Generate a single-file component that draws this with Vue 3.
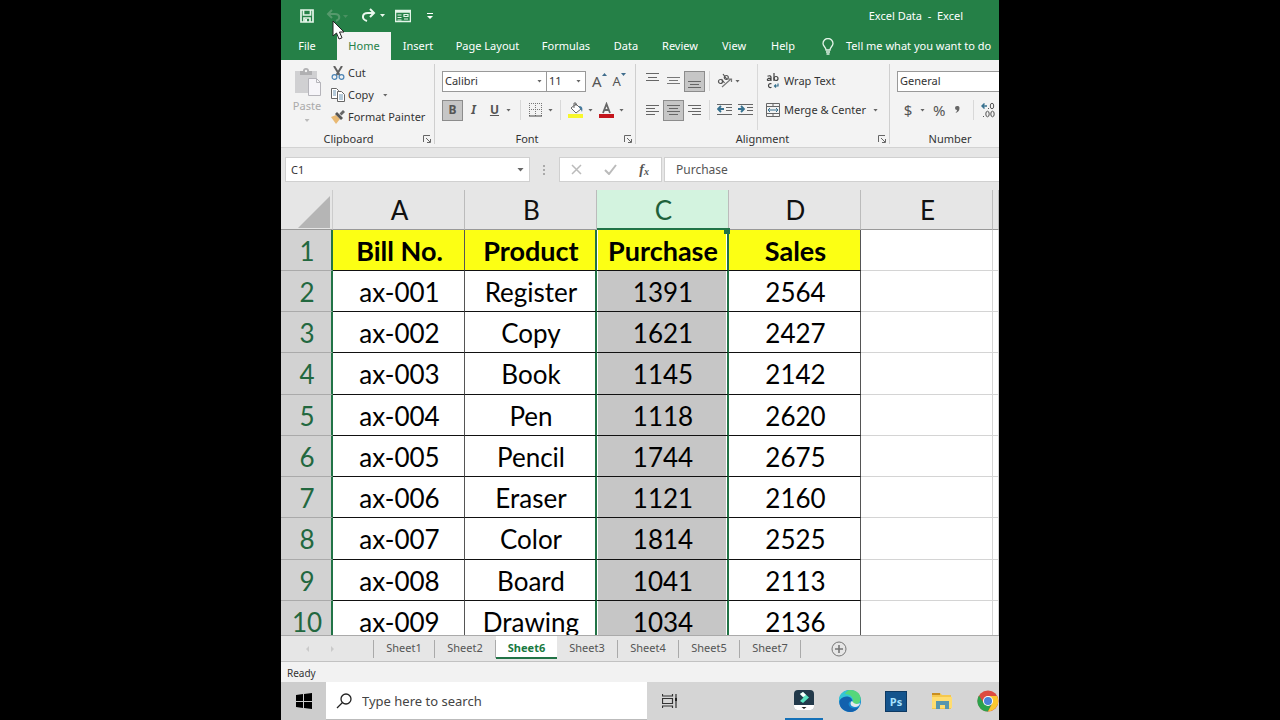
<script setup>
import { ref } from 'vue'

const tabs = [
  { name: 'File', w: 52 }, { name: 'Home', w: 54 }, { name: 'Insert', w: 54 },
  { name: 'Page Layout', w: 85 }, { name: 'Formulas', w: 72 }, { name: 'Data', w: 48 },
  { name: 'Review', w: 60 }, { name: 'View', w: 48 }, { name: 'Help', w: 50 },
]
const columns = ['A', 'B', 'C', 'D', 'E', '']
const rows = [
  ['Bill No.', 'Product', 'Purchase', 'Sales'],
  ['ax-001', 'Register', '1391', '2564'],
  ['ax-002', 'Copy', '1621', '2427'],
  ['ax-003', 'Book', '1145', '2142'],
  ['ax-004', 'Pen', '1118', '2620'],
  ['ax-005', 'Pencil', '1744', '2675'],
  ['ax-006', 'Eraser', '1121', '2160'],
  ['ax-007', 'Color', '1814', '2525'],
  ['ax-008', 'Board', '1041', '2113'],
  ['ax-009', 'Drawing', '1034', '2136'],
]
const sheets = ['Sheet1', 'Sheet2', 'Sheet6', 'Sheet3', 'Sheet4', 'Sheet5', 'Sheet7']
const search = ref('')
const formula = ref('Purchase')
const cellName = ref('C1')
</script>

<template>
  <div class="screen">
    <div class="desktop">
      <header class="titlebar">
        <div class="quick">
          <button aria-label="Save"><svg width="16" height="16" viewBox="0 0 16 16" fill="none" stroke="#e4f5e9" stroke-width="1.7"><path d="M2 2h12v12H2zM4.500 2v5h7V2M5 14v-4h6v4" /><path d="M6 11h2v3H6z" fill="#e4f5e9" stroke="none" /></svg></button>
          <button aria-label="Undo"><svg width="24" height="16" viewBox="0 0 24 16" fill="none" stroke="#56996c" stroke-width="2"><path d="M6 2L2 6l4 4M2 6h7c5 0 6 5 1 7" /><path d="M17 7h5l-2.500 3z" fill="#4a9162" stroke="none" /></svg></button>
          <button aria-label="Redo"><svg width="26" height="16" viewBox="0 0 26 16" fill="none" stroke="#eaf8ee" stroke-width="2"><path d="M9 1l4 4-4 4M13 5H7C1 5 0 11 6 13" /><path d="M19 6h5l-2.500 3z" fill="#eaf8ee" stroke="none" /></svg></button>
          <button aria-label="Form"><svg width="16" height="16" viewBox="0 0 16 16" fill="none" stroke="#e4f5e9"><path d="M.5 2.500h15v11H.5zM1 4h14" stroke-width="1.500" /><path d="M2.500 7h4M2.500 9.500h4M2.500 12h4M9 6.500h4v2H9zM9 11h4" stroke-width="1.200" /></svg></button>
          <button aria-label="Customize toolbar"><svg width="8" height="10" viewBox="0 0 8 10" fill="#fff"><path d="M1 2h6v1H1zM1 5h6L4 8z" /></svg></button>
        </div>
        <span class="doc">Excel Data&nbsp; -&nbsp; Excel</span>
        <svg class="cursor" width="14" height="20" viewBox="0 0 14 20"><path d="M1 1v15l3.500-3 2.500 6 3-1.200L7.500 12H12z" fill="#fff" stroke="#222" /></svg>
      </header>

      <nav class="tabs">
        <button v-for="t in tabs" :key="t.name" :class="{ on: t.name === 'Home' }" :style="{ width: t.w + 'px' }">{{ t.name }}</button>
        <button class="tell"><svg width="12" height="17" viewBox="0 0 12 17" fill="none" stroke="#e4f5e9" stroke-width="1.300"><path d="M4 12c0-3-3-3.500-3-6.500a5 5 0 0 1 10 0c0 3-3 3.500-3 6.500zM4 14h4M4.500 16h3" /></svg>Tell me what you want to do</button>
      </nav>

      <section class="ribbon">
        <div class="group clip">
          <div class="body">
            <button class="paste">
              <svg width="28" height="30" viewBox="0 0 28 30"><path d="M2 4h22v22H2z" fill="#d0d0d2" /><path d="M7 4h3a3 3 0 0 1 6 0h3v4H7z" fill="#b0b0b2" /><circle cx="13" cy="4" r="1.200" fill="#f3f3f3" /><path d="M15.500 11.500h8l4 4v13h-12z" fill="#f6f5f9" stroke="#b5b4ba" /><path d="M23.500 11.500v4h4" fill="none" stroke="#b5b4ba" /></svg>
              <span>Paste</span><i class="caret pale"></i>
            </button>
            <div class="stack">
              <button><svg width="14" height="14" viewBox="0 0 14 14" fill="none"><path d="M3 0l5.500 9M11 0L5.500 9" stroke="#606060" stroke-width="2" /><circle cx="3.500" cy="11" r="2.400" stroke="#4b84b5" stroke-width="1.200" /><circle cx="10.500" cy="11" r="2.400" stroke="#4b84b5" stroke-width="1.200" /></svg>Cut</button>
              <button><svg width="14" height="14" viewBox="0 0 14 14" fill="#fff" stroke="#666"><path d="M.5.5h5l2 2v8h-7z" /><path d="M2 3h3M2 5h3M2 7h3" stroke="#6d96b5" /><path d="M6.500 3.500h4l3 3v7h-7z" /><path d="M8 7h4M8 9h4M8 11h4" stroke="#6d96b5" /></svg>Copy<i class="caret"></i></button>
              <button><svg width="14" height="14" viewBox="0 0 14 14"><path d="M0 7l5-2 4 4-4 5z" fill="#e9b973" /><path d="M4 4l2-2 6 6-2 2z" fill="#555" /><path d="M8.500 3.500L12 0l2 2-3.500 3.500z" fill="#666" /></svg>Format Painter</button>
            </div>
          </div>
          <footer>Clipboard<svg class="launch" width="8" height="8" viewBox="0 0 8 8"><path d="M.5 7V.5H7M3 3l4 4M7.500 4v3.500H4" /></svg></footer>
        </div>

        <div class="group font">
          <div class="body col">
            <div class="line">
              <button class="combo family">Calibri<i class="caret"></i></button>
              <button class="combo size">11<i class="caret"></i></button>
              <button class="big" aria-label="Increase font size">A<svg width="5" height="4" viewBox="0 0 5 4"><path d="M0 3h5L2.500 0z" fill="#3f6c8c" /></svg></button>
              <button class="small" aria-label="Decrease font size">A<svg width="5" height="4" viewBox="0 0 5 4"><path d="M0 0h5L2.500 3z" fill="#3f6c8c" /></svg></button>
            </div>
            <div class="line">
              <button class="sq on"><b>B</b></button>
              <button class="sq"><b><em>I</em></b></button>
              <button class="sq"><b><u>U</u></b></button><i class="caret first"></i>
              <span class="rule"></span>
              <button class="ico" aria-label="Borders"><svg width="14" height="14" viewBox="0 0 14 14" stroke="#777"><path d="M.5 0v13M6.500 0v13M12.500 0v13M0 .5h13M0 6.500h13" stroke-dasharray="1 1" /><path d="M0 13h13" stroke="#444" /></svg></button><i class="caret"></i>
              <span class="rule"></span>
              <button class="ico" aria-label="Fill color"><svg width="16" height="16" viewBox="0 0 16 16"><path d="M3 6l5-4 5 5-5 4z" fill="#fff" stroke="#666" /><path d="M6 6V1h2v3" fill="none" stroke="#666" /><path d="M11 4c3 0 4 2 3 6-1-2-1-3-2-3z" fill="#45799c" /><path d="M0 12h15v4H0z" fill="#f7f72b" /></svg></button><i class="caret"></i>
              <button class="ico" aria-label="Font color"><svg width="16" height="16" viewBox="0 0 16 16"><path d="M4 11L7.500 2l3.500 9M5.500 8h4.500" fill="none" stroke="#666" stroke-width="1.800" /><path d="M0 12h15v4H0z" fill="#c4151c" /></svg></button><i class="caret"></i>
            </div>
          </div>
          <footer>Font<svg class="launch" width="8" height="8" viewBox="0 0 8 8"><path d="M.5 7V.5H7M3 3l4 4M7.500 4v3.500H4" /></svg></footer>
        </div>

        <div class="group align">
          <div class="body">
            <div class="col alignbtns">
              <div class="line">
                <button class="sq" aria-label="Top align"><svg width="14" height="16" viewBox="0 0 14 16" stroke="#666"><path d="M0 .5h13M2 4.500h9M0 7.500h13" /></svg></button>
                <button class="sq" aria-label="Middle align"><svg width="14" height="16" viewBox="0 0 14 16" stroke="#777"><path d="M0 4.500h13M2 7.500h9M0 10.500h13" /></svg></button>
                <button class="sq on" aria-label="Bottom align"><svg width="14" height="16" viewBox="0 0 14 16" stroke="#666"><path d="M0 8.500h13M2 11.500h9M0 14.500h13" /></svg></button>
                <span class="rule"></span>
                <button class="ico" aria-label="Orientation"><svg width="16" height="16" viewBox="0 0 16 16" fill="none" stroke="#555" stroke-width="1.200"><circle cx="3.500" cy="8.500" r="2" /><path d="M4.500 6l3 4M6 1l4 5.500" /><circle cx="9.300" cy="4.500" r="2" /><path d="M5 14l9-8M11 6h3.500v3" stroke="#777" /></svg></button><i class="caret"></i>
              </div>
              <div class="line">
                <button class="sq" aria-label="Align left"><svg width="14" height="14" viewBox="0 0 14 14" stroke="#666"><path d="M0 2.500h13M0 5.500h9M0 8.500h13M0 11.500h9" /></svg></button>
                <button class="sq on" aria-label="Center"><svg width="14" height="14" viewBox="0 0 14 14" stroke="#666"><path d="M0 2.500h13M2 5.500h9M0 8.500h13M2 11.500h9" /></svg></button>
                <button class="sq" aria-label="Align right"><svg width="14" height="14" viewBox="0 0 14 14" stroke="#666"><path d="M0 2.500h13M4 5.500h9M0 8.500h13M4 11.500h9" /></svg></button>
                <span class="rule"></span>
                <button class="ico" aria-label="Decrease indent"><svg width="16" height="14" viewBox="0 0 16 14" fill="none" stroke="#666"><path d="M0 1.500h15M9 4.500h6M9 7.500h6M0 11.500h15" /><path d="M1 6h6M4 3L1 6l3 3" stroke="#37718f" stroke-width="1.800" /></svg></button>
                <button class="ico" aria-label="Increase indent"><svg width="16" height="14" viewBox="0 0 16 14" fill="none" stroke="#666"><path d="M0 1.500h15M9 4.500h6M9 7.500h6M0 11.500h15" /><path d="M0 6h6M3 3l3 3-3 3" stroke="#37718f" stroke-width="1.800" /></svg></button>
              </div>
            </div>
            <div class="col wrapbtns">
              <button><svg width="14" height="16" viewBox="0 0 14 16" fill="none" stroke="#444" stroke-width="1.200"><path d="M1.500 3.300c2-1 3.500-.5 3.500 1V8M5 5.200C1 5 .5 7.500 2.500 7.500 4 7.500 5 6.500 5 5.500M8 0v8" /><circle cx="10" cy="5.500" r="2" /><path d="M5.500 10.800c-4-1.500-4 5 0 3.500" /><path d="M12 10.500v2.500H8.500M10 11.500L8.500 13l1.500 1.500" stroke="#37718f" /></svg>Wrap Text</button>
              <button><svg width="14" height="14" viewBox="0 0 14 14" fill="none" stroke="#666"><path d="M.5.500h13v13H.5zM0 3.500h14M0 10.500h14M7 0v3M7 11v3" /><path d="M2 7h10M4 5L2 7l2 2M10 5l2 2-2 2" stroke="#37718f" /></svg>Merge &amp; Center<i class="caret"></i></button>
            </div>
          </div>
          <footer>Alignment<svg class="launch" width="8" height="8" viewBox="0 0 8 8"><path d="M.5 7V.5H7M3 3l4 4M7.500 4v3.500H4" /></svg></footer>
        </div>

        <div class="group number">
          <div class="body col">
            <div class="line"><button class="combo general">General</button></div>
            <div class="line signs">
              <button>$</button><i class="caret"></i><button>%</button>
              <button class="comma" aria-label="Comma style"><svg width="6" height="8" viewBox="0 0 6 8"><path d="M3 0a2 2 0 0 1 2.500 2C5.500 5 4 6 1.500 7c1-1.300 1.500-2 1.500-3A2 2 0 0 1 3 0z" fill="#666" /></svg></button>
              <span class="rule"></span>
              <button class="ico" aria-label="Increase decimal"><svg width="16" height="16" viewBox="0 0 16 16" fill="none" stroke="#555"><path d="M6 4H1M3.500 1.500L1 4l2.500 2.500" stroke="#37718f" stroke-width="1.500" /><ellipse cx="11" cy="4" rx="1.700" ry="2.800" /><ellipse cx="6.500" cy="12" rx="1.700" ry="2.800" /><ellipse cx="11.500" cy="12" rx="1.700" ry="2.800" /><path d="M7 6.500h1M2 14.500h1" /></svg></button>
            </div>
          </div>
          <footer>Number</footer>
        </div>
      </section>

      <section class="formulabar">
        <label class="namebox"><input v-model="cellName" aria-label="Name box" /><i class="caret"></i></label>
        <svg class="dots" width="3" height="12" viewBox="0 0 3 12" fill="#aaa"><path d="M0 1h2v2H0zM0 5h2v2H0zM0 9h2v2H0z" /></svg>
        <div class="fx">
          <button aria-label="Cancel"><svg width="11" height="11" viewBox="0 0 11 11" stroke="#bbb" stroke-width="1.500"><path d="M1 1l9 9M10 1l-9 9" /></svg></button>
          <button aria-label="Enter"><svg width="13" height="11" viewBox="0 0 13 11" fill="none" stroke="#bbb" stroke-width="2"><path d="M1 6l4 4 7-9" /></svg></button>
          <button class="fn">f<small>x</small></button>
        </div>
        <input v-model="formula" class="formula" aria-label="Formula" />
      </section>

      <main class="sheet">
        <table>
          <colgroup><col class="c0" /><col v-for="n in 5" :key="n" class="cn" /><col /></colgroup>
          <thead>
            <tr>
              <th class="corner"><svg width="32" height="32" viewBox="0 0 32 32"><path d="M32 0v32H0z" fill="#b5b5b5" /></svg></th>
              <th v-for="c in columns" :key="c" :class="{ picked: c === 'C' }">{{ c }}</th>
            </tr>
          </thead>
          <tbody>
            <tr v-for="(r, i) in rows" :key="i">
              <th>{{ i + 1 }}</th>
              <td v-for="(v, j) in r" :key="j" :class="{ head: i === 0, sel: j === 2, before: j === 1 }">{{ v }}<span v-if="i === 0 && j === 2" class="handle"></span></td>
              <td class="empty"></td><td class="empty"></td>
            </tr>
          </tbody>
        </table>
      </main>

      <nav class="sheets">
        <span class="arrows"><svg width="30" height="8" viewBox="0 0 30 8" fill="#cacaca"><path d="M4 1v6L1 4zM26 1v6l3-3z" /></svg></span>
        <button v-for="s in sheets" :key="s" :class="{ on: s === 'Sheet6' }">{{ s }}</button>
        <button class="add" aria-label="New sheet"><svg width="16" height="16" viewBox="0 0 16 16" fill="none" stroke="#777"><circle cx="8" cy="8" r="7" /><path d="M4 8h8M8 4v8" stroke-width="1.600" /></svg></button>
      </nav>
      <div class="status">Ready</div>

      <footer class="taskbar">
        <button class="start" aria-label="Start"><svg width="16" height="16" viewBox="0 0 16 16"><path d="M0 2l7-1v7H0zM8 1l8-1v8H8zM0 9h7v6l-7-1zM8 9h8v7l-8-1z" /></svg></button>
        <label class="search"><svg width="16" height="16" viewBox="0 0 16 16" fill="none" stroke="#222" stroke-width="1.300"><circle cx="10" cy="6" r="5" /><path d="M6.500 9.500L1 15" /></svg><input v-model="search" placeholder="Type here to search" aria-label="Search" /></label>
        <button class="view" aria-label="Task view"><svg width="16" height="14" viewBox="0 0 16 14" fill="none" stroke="#333" stroke-width="1.200"><path d="M.5 0v2h10V0M.5 4.500h10v5H.5zM.5 14v-2h10v2M14 0v14" /><path d="M13 4h2v3h-2z" fill="#222" stroke="none" /></svg></button>
        <div class="apps">
          <button class="active" aria-label="Filmora"><svg width="22" height="22" viewBox="0 0 22 22"><rect x="1" y="1" width="20" height="20" rx="4" fill="#22394a" /><path d="M7 5l3-2 6 5.500-6 5.500-3-2 3.500-3.500z" fill="#59e2c0" /><path d="M7 5l3-2 3 3-3 2z" fill="#fff" /><path d="M1 16h20v1c0 3-1 4-4 4H5c-3 0-4-1-4-4z" fill="#fff" /><path d="M8.500 18h5L11 20z" fill="#222" /></svg></button>
          <button aria-label="Edge"><svg width="24" height="24" viewBox="0 0 24 24"><circle cx="12" cy="12" r="11" fill="#168bd2" /><path d="M1 12C0-1 19-2 22 8c2 6-2 9-8 7 2-3 0-7-4-7-3 0-7 1-9 4z" fill="#35c5d4" /><path d="M12 1c12 0 13 12 7 14-3 1-5 0-5-1 3-4-1-9-7-9 1-2 3-4 5-4z" fill="#55d77a" /><path d="M2 11c5-6 12-3 12 1-4 0-5 5 0 7 3 1 5 0 7-1-3 5-9 6-13 4C2 20 1 15 2 11z" fill="#1261ae" /><path d="M14 12c-3 2-1 6 3 6 3 0 5-2 5-4-3 2-6 1-8-2z" fill="#e4e8ec" /></svg></button>
          <button aria-label="Photoshop"><span class="ps">Ps</span></button>
          <button aria-label="File Explorer"><svg width="22" height="20" viewBox="0 0 22 20"><path d="M1 2h8l2 2h9v14H1z" fill="#f5c84e" /><path d="M1 2h8v2H1z" fill="#c98e20" /><path d="M1 6h20v11H1z" fill="#ffdd70" /><path d="M5 10h13v8h-4v-4H9v4H5z" fill="#5796ae" /></svg></button>
          <button aria-label="Chrome"><svg width="22" height="22" viewBox="0 0 22 22"><circle cx="11" cy="11" r="10.500" fill="#dd4b41" /><path d="M2 5.500A10.500 10.500 0 0 0 11 21.500l4-8-8 0z" fill="#2ba24c" /><path d="M11 21.500A10.500 10.500 0 0 0 20 6h-9l4 8z" fill="#fbc72e" /><circle cx="11" cy="11" r="5" fill="#fff" /><circle cx="11" cy="11" r="4" fill="#4a82d8" /></svg></button>
        </div>
      </footer>
    </div>
  </div>
</template>

<style>
body { margin: 0; background: #000; }
</style>

<style scoped>
* { box-sizing: border-box; }
.screen { display: flex; justify-content: center; height: 100vh; background: #000; overflow: hidden; }
.desktop { display: flex; flex-direction: column; height: 100vh; aspect-ratio: 359 / 360; overflow: hidden; background: #e6e6e6; color: #333; font: 11px/16px "Noto Sans", sans-serif; }
button { display: flex; align-items: center; justify-content: center; flex: none; border: 0; padding: 0; margin: 0; background: none; font: inherit; color: inherit; white-space: nowrap; }
input { border: 0; padding: 0; margin: 0; background: none; font: inherit; color: inherit; min-width: 0; outline: none; }
svg { flex: none; display: block; }
.caret { flex: none; width: 5px; height: 3px; background: #666; clip-path: polygon(0 0, 100% 0, 50% 100%); }
.pale { background: #bbb; }

.titlebar { position: relative; display: flex; flex: none; align-items: center; justify-content: space-between; height: 32px; padding: 0 36px 1px 18px; background: #258047; color: #fff; }
.quick { display: flex; align-items: center; gap: 11px; }
.quick button:nth-child(4) { margin-left: -3px; margin-right: 4px; }
.cursor { position: absolute; left: 51px; top: 20px; z-index: 2; }
.tabs { display: flex; flex: none; height: 28px; background: #258047; color: #fff; }
.tabs .on { margin-left: 4px; background: #f3f3f3; color: #258047; }
.tabs .tell { gap: 12px; margin-left: 14px; }

.ribbon { display: flex; flex: none; height: 88px; padding-top: 4px; background: #f3f3f3; border-bottom: 1px solid #d2d2d2; overflow: hidden; }
.group { display: flex; flex: none; flex-direction: column; height: 80px; border-right: 1px solid #cfcfcf; }
.body { display: flex; flex: none; height: 66px; }
.col { display: flex; flex-direction: column; }
.group footer { position: relative; text-align: center; line-height: 18px; }
.launch { position: absolute; right: 3px; top: 5px; fill: none; stroke: #666; }
.line { display: flex; align-items: center; height: 22px; margin-bottom: 7px; }
.clip { width: 154px; }
.clip footer { padding-right: 18px; }
.paste { flex-direction: column; justify-content: flex-start; width: 50px; padding: 3px 0 0 2px; color: #aaa; gap: 1px; }
.paste .caret { margin-top: 4px; }
.stack button { justify-content: flex-start; height: 22px; gap: 3px; }
.stack .caret { margin-left: 6px; }
.stack { margin-top: -2px; }
.font { width: 201px; }
.font footer { padding-right: 16px; }
.font .body { padding: 6px 0 0 7px; }
.combo { justify-content: space-between; height: 21px; padding: 0 4px 0 2px; border: 1px solid #999; background: #fff; }
.family { width: 105px; }
.size { width: 40px; margin-left: -1px; }
.big, .small { align-items: flex-start; margin-left: 6px; font-size: 15px; color: #555; }
.small { font-size: 13px; }
.sq { width: 21px; height: 21px; color: #555; font-size: 12px; }
.sq.on { background: #c6c6c6; border: 1px solid #8c8c8c; }
.line > .caret { margin: 0 3px 0 2px; }
.font .line > .first { margin: 0 5px 0 1px; }
.rule { flex: none; width: 1px; height: 20px; margin: 0 4px; background: #d8d8d8; }
.ico { width: 21px; height: 20px; }
.align { width: 254px; }
.alignbtns { width: 121px; padding: 6px 0 0 6px; }
.alignbtns .ico + .caret { margin-left: 0; }
.wrapbtns { padding: 6px 0 0 8px; border-left: 1px solid #d8d8d8; align-items: flex-start; }
.wrapbtns button { height: 22px; gap: 4px; margin-bottom: 7px; }
.wrapbtns .caret { margin-left: 3px; }
.number { width: 132px; border: 0; }
.number footer { padding-right: 12px; }
.number .body { padding: 6px 0 0 7px; }
.general { width: 125px; justify-content: flex-start; }
.signs { color: #555; font-size: 15px; }
.signs button:first-child { width: 22px; }
.signs > .caret { margin: 0 8px 0 1px; }
.signs .comma { width: 24px; }

.formulabar { display: flex; flex: none; height: 42px; padding: 9px 0 8px 4px; }
.namebox, .fx, .formula { height: 25px; border: 1px solid #d0d0d0; background: #fff; }
.namebox { display: flex; align-items: center; width: 245px; padding: 0 5px; }
.namebox input { flex: 1; }
.namebox .caret { width: 7px; height: 4px; }
.dots { margin: 7px 13px 0 13px; }
.fx { display: flex; width: 103px; }
.fx button { flex: 1; }
.fn { font: italic bold 14px/16px "Liberation Serif", serif; color: #555; }
.fn small { font-size: 10px; padding-top: 4px; }
.formula { flex: 1; margin-left: 2px; padding: 0 11px; font-size: 12px; border-right: 0; color: #555; }

.sheet { flex: 1; min-height: 0; overflow: hidden; background: #fff; }
table { width: 100%; table-layout: fixed; border-collapse: separate; border-spacing: 0; font-family: Lato, sans-serif; font-size: 26px; line-height: 26px; color: #000; text-align: center; }
.c0 { width: 52px; }
.cn { width: 132px; }
th, td { padding: 1px 0 0 2px; white-space: nowrap; overflow: hidden; }
thead th { height: 40px; background: #e6e6e6; font-weight: 400; color: #111; border-right: 1px solid #bbb; border-bottom: 1px solid #999; }
thead .picked { background: #d3f3df; color: #20603a; border-bottom: 2px solid #217346; }
thead .corner { padding-left: 0; border-right-color: #ccc; }
.corner svg { margin: 4px 0 0 17px; }
tbody th { height: 41px; background: #d2d2d2; color: #22683f; font-weight: 400; border-right: 2px solid #217346; border-bottom: 1px solid #aaa; }
tbody tr:nth-child(4n) th { height: 42px; }
td { border-right: 1px solid #555; border-bottom: 1px solid #111; }
td.head { background: #fcff14; font-size: 27px; font-weight: 700; }
td.before { border-right: 2px solid #217346; }
td.sel { position: relative; overflow: visible; background: #c6c6c6; border-right: 2px solid #217346; box-shadow: inset 1px 0 #fff, inset -1px 0 #fff; }
td.sel.head { background: #fcff14; }
.handle { position: absolute; right: -3px; top: -2px; width: 6px; height: 6px; background: #217346; }
td.empty { border-color: #d4d4d4; }

.sheets { display: flex; flex: none; align-items: center; height: 27px; background: #e6e6e6; border-top: 1px solid #aaa; border-bottom: 1px solid #c2c2c2; color: #555; }
.arrows { width: 92px; padding-left: 24px; }
.sheets button { width: 61px; height: 18px; padding-bottom: 1px; border-right: 1px solid #aaa; }
.sheets button:nth-child(2) { width: 62px; border-left: 1px solid #aaa; }
.sheets .on { align-self: flex-start; height: 23px; padding: 3px 0 0; background: #fff; color: #18793f; font-weight: 700; border-bottom: 2px solid #217346; border-right: 0; }
.sheets .add { width: 76px; border: 0; padding: 0; }
.status { flex: none; height: 20px; padding: 3px 6px 1px; background: #f2f2f2; font-size: 10px; }

.taskbar { display: flex; flex: none; height: 38px; background: #d5d5d5; }
.start { width: 45px; background: #cdcdcd; }
.search { display: flex; align-items: center; gap: 10px; flex: 0 1 321px; padding-left: 10px; background: #fff; border-bottom: 1px solid #bbb; font-size: 13px; }
.search input { flex: 1; }
.search input::placeholder { color: #444; opacity: 1; }
.view { width: 46px; }
.apps { display: flex; margin-left: auto; margin-right: -12px; }
.apps button { width: 46px; }
.apps .active { width: 38px; margin-right: 4px; border-bottom: 2px solid #1571b8; }
.ps { width: 22px; height: 21px; background: #14548d; color: #a6e1ff; font: bold 11px/20px "Open Sans", sans-serif; border: 1px solid #0d3962; }
</style>
